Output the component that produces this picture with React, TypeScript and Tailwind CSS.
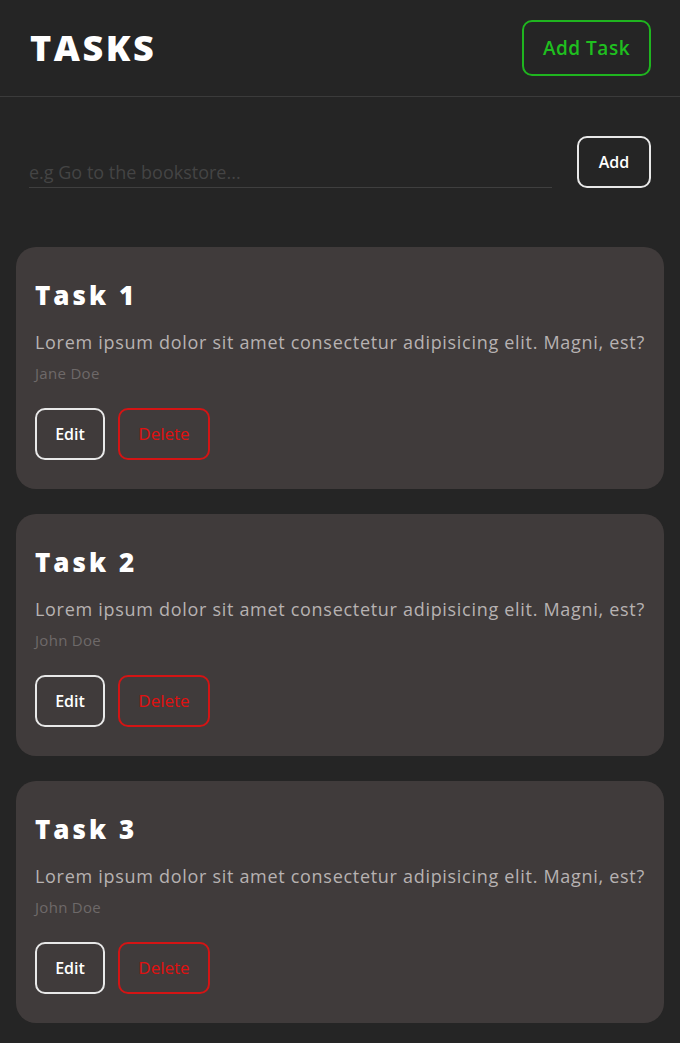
import React, { useState } from 'react';

type Task = { id: number; title: string; body: string; author: string };

const initialTasks: Task[] = [
    { id: 1, title: 'Task 1', body: 'Lorem ipsum dolor sit amet consectetur adipisicing elit. Magni, est?', author: 'Jane Doe' },
    { id: 2, title: 'Task 2', body: 'Lorem ipsum dolor sit amet consectetur adipisicing elit. Magni, est?', author: 'John Doe' },
    { id: 3, title: 'Task 3', body: 'Lorem ipsum dolor sit amet consectetur adipisicing elit. Magni, est?', author: 'John Doe' },
];

const TaskCard = ({ task, onDelete }: { task: Task, onDelete: (id: number) => void }) => (
    <div className="bg-[#403b3b] rounded-[20px] px-[19px] pt-[30px] pb-[29px]">
        <h2 className="text-[26px] leading-[36px] font-extrabold tracking-[3px] text-white">{task.title}</h2>
        <p className="mt-[15px] text-[18px] leading-[28px] tracking-[0.7px] text-[#b7b2b2]">{task.body}</p>
        <p className="mt-[7px] text-[15px] leading-[20px] tracking-[0.3px] text-[#6e6969]">{task.author}</p>
        <div className="mt-[25px] flex gap-[13px]">
            <button className="h-[52px] w-[70px] rounded-[10px] border-2 border-[#e8e8e8] text-[16px] font-semibold text-white">
                Edit
            </button>
            <button
                onClick={() => onDelete(task.id)}
                className="h-[52px] w-[92px] rounded-[10px] border-2 border-[#d41414] text-[17px] font-medium text-[#e01010]"
            >
                Delete
            </button>
        </div>
    </div>
);

const App = () => {
    const [tasks, setTasks] = useState(initialTasks);
    const [text, setText] = useState('');

    const handleAdd = () => {
        if (!text.trim()) return;
        setTasks(prev => [...prev, { id: Date.now(), title: `Task ${prev.length + 1}`, body: text, author: 'John Doe' }]);
        setText('');
    };

    return (
        <div className="min-h-[1043px] bg-[#252525] font-['Open_Sans',sans-serif]">
            <header className="flex h-[97px] items-center justify-between border-b border-[#3b3b3b] pl-[30px] pr-[29px]">
                <h1 className="text-[36px] font-extrabold tracking-[2.5px] text-white">TASKS</h1>
                <button className="h-[56px] w-[129px] rounded-[10px] border-2 border-[#1fb51f] text-[19px] font-semibold tracking-[0.5px] text-[#1fbf1f]">
                    Add Task
                </button>
            </header>
            <div className="flex items-center gap-[25px] pl-[29px] pr-[29px] pt-[39px]">
                <input
                    type="text"
                    value={text}
                    onChange={(e) => setText(e.target.value)}
                    placeholder="e.g Go to the bookstore..."
                    className="mt-[12px] h-[40px] flex-1 border-b border-[#3f3f3f] bg-transparent pt-[8px] text-[18px] text-white outline-none placeholder:text-[#444444]"
                />
                <button
                    onClick={handleAdd}
                    className="h-[52px] w-[74px] rounded-[10px] border-2 border-[#e8e8e8] text-[16px] font-semibold text-white"
                >
                    Add
                </button>
            </div>
            <div className="flex flex-col gap-[25px] px-[16px] pt-[59px] pb-[20px]">
                {tasks.map(task => (
                    <TaskCard key={task.id} task={task} onDelete={(id) => setTasks(prev => prev.filter(t => t.id !== id))} />
                ))}
            </div>
        </div>
    );
};

export default App;
